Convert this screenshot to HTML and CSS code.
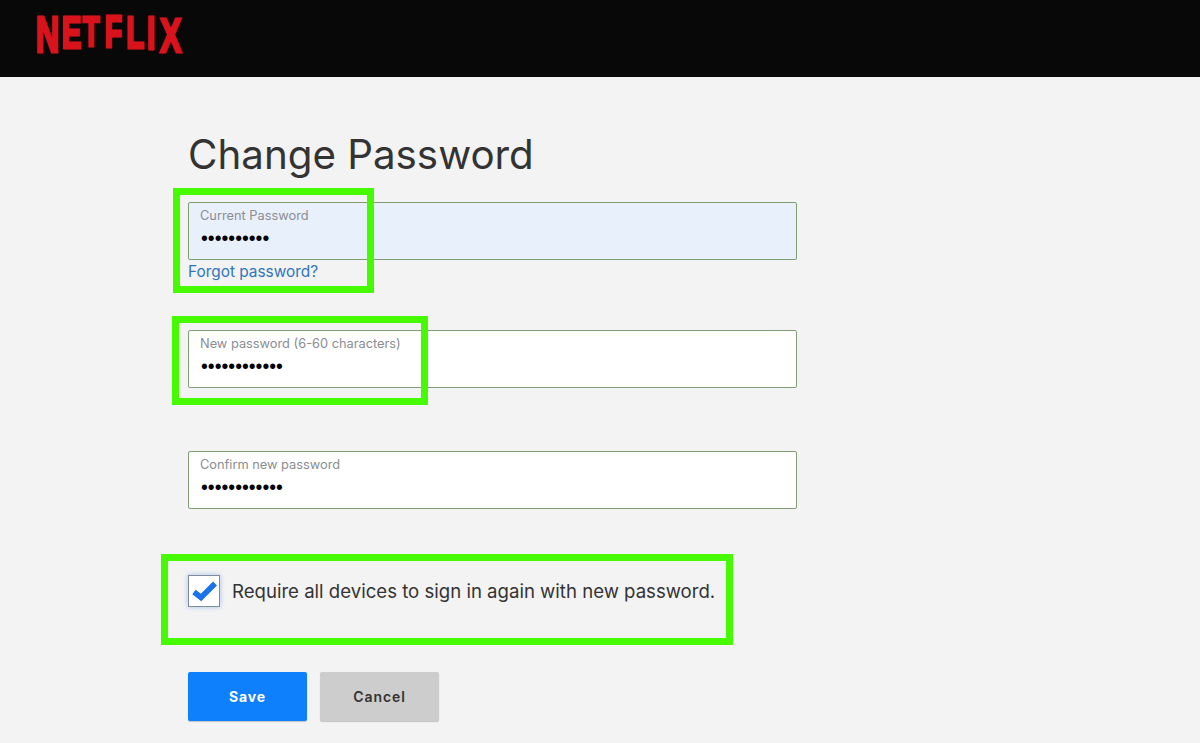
FILE: index.html
```html
<!DOCTYPE html>
<html lang="en">
<head>
    <meta charset="UTF-8">
    <meta name="viewport" content="width=device-width, initial-scale=1.0">
    <title>Change Password</title>
    <link rel="stylesheet" href="styles.css">
</head>
<body>
    <header class="top-bar">
        <svg class="logo" width="240" height="60" viewBox="0 0 240 60" role="img" aria-label="Netflix">
            <text transform="scale(0.65 1)"><tspan x="9" y="44" font-size="50">N</tspan><tspan x="49" y="40.5" font-size="45">E</tspan><tspan x="81" y="38.5" font-size="42">T</tspan><tspan x="115" y="39.5" font-size="43.5">F</tspan><tspan x="148" y="40.5" font-size="45">L</tspan><tspan x="180" y="41" font-size="45.5">I</tspan><tspan x="200" y="44.5" font-size="49">X</tspan></text>
        </svg>
    </header>

    <main class="page">
        <h1>Change Password</h1>

        <form class="password-form">
            <div class="field-group first">
                <label class="field autofilled">
                    <span class="field-label">Current Password</span>
                    <input type="password" value="aaaaaaaaaa">
                </label>
                <a class="forgot-link" href="#">Forgot password?</a>
            </div>

            <div class="field-group second">
                <label class="field">
                    <span class="field-label">New password (6-60 characters)</span>
                    <input type="password" value="aaaaaaaaaaaa">
                </label>
            </div>

            <div class="field-group third">
                <label class="field">
                    <span class="field-label">Confirm new password</span>
                    <input type="password" value="aaaaaaaaaaaa">
                </label>
            </div>

            <label class="sign-out-row">
                <span class="checkbox">
                    <svg width="26" height="22" viewBox="0 0 26 22">
                        <path d="M3 12 L10 17.5 L24 3.5" fill="none" stroke="#1a73e8" stroke-width="5.5"/>
                    </svg>
                </span>
                <span>Require all devices to sign in again with new password.</span>
            </label>

            <div class="actions">
                <button type="button" class="btn btn-save">Save</button>
                <button type="button" class="btn btn-cancel">Cancel</button>
            </div>
        </form>

        <!-- green annotation boxes drawn over the form -->
        <div class="mark mark-current"></div>
        <div class="mark mark-new"></div>
        <div class="mark mark-devices"></div>
    </main>
</body>
</html>
```

FILE: styles.css
```css
* {
    margin: 0;
    padding: 0;
    box-sizing: border-box;
}

html, body {
    height: 743px;
    overflow: hidden;
}

body {
    font-family: Inter, 'Liberation Sans', sans-serif;
    background: #f3f3f3;
    color: #333;
}

.top-bar {
    height: 77px;
    background: #080808;
    padding: 8px 0 0 30px;
}

.logo {
    display: block;
}

.logo text {
    font-family: 'Liberation Sans', sans-serif;
    font-weight: 700;
    fill: #d9131c;
    stroke: #d9131c;
    stroke-width: 3px;
}

.page {
    position: relative;
    padding: 53px 0 0 188px;
}

h1 {
    font-size: 40.3px;
    font-weight: 400;
    line-height: 50px;
    color: #333;
}

.password-form {
    width: 609px;
    margin-top: 22px;
}

.field {
    display: block;
    height: 58px;
    padding: 5px 11px 0;
    background: #fff;
    border: 1px solid #7f9f72;
    border-radius: 2px;
}

.field.autofilled,
.field.autofilled input {
    background: #e8f0fc;
}

.field-label {
    display: block;
    font-size: 12.8px;
    line-height: 16px;
    color: #8a8d92;
}

.field input {
    display: block;
    width: 100%;
    margin-top: 2px;
    padding-left: 1px;
    border: none;
    outline: none;
    background: #fff;
    font-family: 'Liberation Sans', sans-serif;
    font-size: 19.5px;
    line-height: 24px;
    height: 24px;
    color: #000;
}

.forgot-link {
    display: block;
    margin-top: 3px;
    font-size: 15.4px;
    line-height: 18px;
    color: #2f75bb;
    text-decoration: none;
}

.field-group.second {
    margin-top: 49px;
}

.field-group.third {
    margin-top: 63px;
}

.sign-out-row {
    display: flex;
    align-items: center;
    gap: 12px;
    margin-top: 66px;
    font-size: 18.6px;
    white-space: nowrap;
    color: #333;
}

.checkbox {
    display: flex;
    align-items: center;
    justify-content: center;
    width: 32px;
    height: 32px;
    background: #fff;
    border: 1px solid #808b9c;
    box-shadow: 0 0 5px rgba(30, 110, 230, 0.35);
}

.actions {
    display: flex;
    gap: 13px;
    margin-top: 65px;
}

.btn {
    width: 119px;
    height: 49px;
    border: none;
    border-radius: 2px;
    font-family: Inter, 'Liberation Sans', sans-serif;
    font-size: 14px;
    font-weight: 700;
    letter-spacing: 0.9px;
    box-shadow: 0 1px 1px rgba(0, 0, 0, 0.2);
}

.btn-save {
    background: #0f80fc;
    color: #fff;
}

.btn-cancel {
    background: #cdcdcd;
    color: #333;
    font-weight: 600;
}

.mark {
    position: absolute;
    border: 7px solid #46fb00;
}

.mark-current {
    left: 173px;
    top: 111px;
    width: 201px;
    height: 105px;
}

.mark-new {
    left: 172px;
    top: 239px;
    width: 256px;
    height: 89px;
}

.mark-devices {
    left: 161px;
    top: 477px;
    width: 572px;
    height: 91px;
}
```
